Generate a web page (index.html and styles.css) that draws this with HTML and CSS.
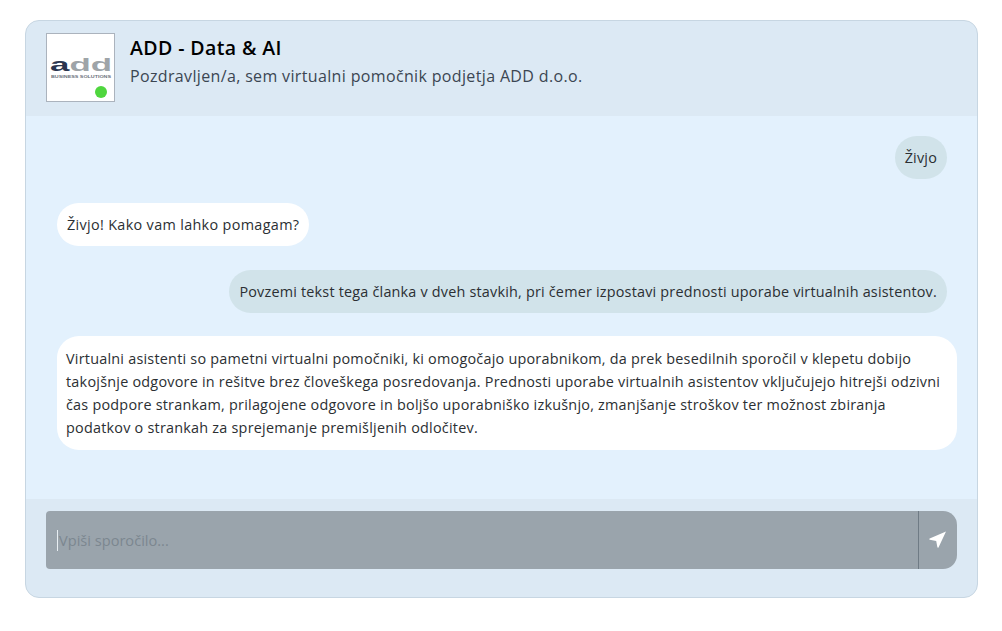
FILE: index.html
```html
<!DOCTYPE html>
<html lang="sl">
<head>
<meta charset="utf-8">
<title>ADD - Data &amp; AI</title>
<link rel="stylesheet" href="styles.css">
</head>
<body>
<main class="chat">
  <header class="chat-header">
    <div class="avatar">
      <svg class="logo" viewBox="0 0 67 67" width="67" height="67" aria-label="add">
        <text class="logo-mark" x="3" y="36.5" textLength="62" lengthAdjust="spacingAndGlyphs"><tspan class="logo-a">a</tspan><tspan class="logo-d">dd</tspan></text>
        <text class="logo-sub" x="4" y="44" textLength="60" lengthAdjust="spacingAndGlyphs">BUSINESS SOLUTIONS</text>
      </svg>
      <span class="status"></span>
    </div>
    <div class="heading">
      <h1 class="title">ADD - Data &amp; AI</h1>
      <p class="subtitle">Pozdravljen/a, sem virtualni pomočnik podjetja ADD d.o.o.</p>
    </div>
  </header>
  <section class="messages">
    <div class="msg msg-user">Živjo</div>
    <div class="msg msg-bot msg-short">Živjo! Kako vam lahko pomagam?</div>
    <div class="msg msg-user">Povzemi tekst tega članka v dveh stavkih, pri čemer izpostavi prednosti uporabe virtualnih asistentov.</div>
    <div class="msg msg-bot msg-long">Virtualni asistenti so pametni virtualni pomočniki, ki omogočajo uporabnikom, da prek besedilnih sporočil v klepetu dobijo<br>takojšnje odgovore in rešitve brez človeškega posredovanja. Prednosti uporabe virtualnih asistentov vključujejo hitrejši odzivni<br>čas podpore strankam, prilagojene odgovore in boljšo uporabniško izkušnjo, zmanjšanje stroškov ter možnost zbiranja<br>podatkov o strankah za sprejemanje premišljenih odločitev.</div>
  </section>
  <footer class="composer">
    <div class="input-group">
      <div class="input"><span class="caret"></span><span class="placeholder">Vpiši sporočilo...</span></div>
      <button class="send" type="button" aria-label="Pošlji">
        <svg viewBox="0 0 18 18" width="18" height="18"><path d="M17 .5.7 7.6c-.6.3-.5 1 .1 1.1l6.4 1.2 1.2 6.4c.1.6.8.7 1.1.1z" fill="#fff"/></svg>
      </button>
    </div>
  </footer>
</main>
</body>
</html>
```
FILE: styles.css
```css
* { box-sizing: border-box; }
html, body { margin: 0; background: #fff; }
body {
  padding: 20px 24px 33px 25px;
  font-family: "Open Sans", "Noto Sans", sans-serif;
  color: #212529;
}
.chat {
  height: 578px;
  display: flex;
  flex-direction: column;
  border: 1px solid #c7d6e2;
  border-radius: 14px;
  overflow: hidden;
  background: #dce9f4;
}
.chat-header {
  height: 95px;
  flex: none;
  display: flex;
  align-items: flex-start;
  gap: 15px;
  padding: 12px 20px 0;
}
.avatar {
  position: relative;
  width: 69px;
  height: 69px;
  flex: none;
  background: #fff;
  border: 1px solid #abb3bd;
}
.logo { display: block; }
.logo-mark { font: 700 19px "Liberation Sans", sans-serif; }
.logo-a { fill: #2b3550; }
.logo-d { fill: #9ea4a8; }
.logo-sub { font: 700 3px "Liberation Sans", sans-serif; fill: #6c727c; }
.status {
  position: absolute;
  right: 7px;
  bottom: 3px;
  width: 12px;
  height: 12px;
  border-radius: 50%;
  background: #4fd63e;
}
.heading { padding-top: 3px; }
.title {
  margin: 0;
  font-size: 19.5px;
  line-height: 24px;
  font-weight: 600;
  letter-spacing: .4px;
  color: #000;
}
.subtitle {
  margin: 4px 0 0;
  font-size: 16px;
  line-height: 24px;
  letter-spacing: .35px;
  color: #3b4652;
}
.messages {
  flex: 1;
  display: flex;
  flex-direction: column;
  align-items: flex-start;
  gap: 24px;
  padding: 20px 20px 0 31px;
  background: #e3f1fd;
}
.msg {
  font-size: 14.4px;
  line-height: 23px;
  letter-spacing: .2px;
  padding: 10px;
  border-radius: 22px;
  background: #fff;
  color: #2b2f33;
}
.msg-user {
  align-self: flex-end;
  margin-right: 10px;
  background: #d1e3ea;
}
.msg-short { letter-spacing: .33px; }
.msg-long {
  align-self: stretch;
  margin-top: -1px;
  padding: 11px 9px;
  letter-spacing: .23px;
}
.composer {
  height: 98px;
  flex: none;
  padding: 12px 20px 0;
}
.input-group {
  display: flex;
  height: 58px;
  border-radius: 4px 14px 14px 4px;
  background: #9aa4ac;
  overflow: hidden;
}
.input {
  flex: 1;
  display: flex;
  align-items: center;
  padding-left: 11px;
  border-right: 1px solid #6f7b85;
}
.caret {
  width: 1px;
  height: 21px;
  background: #e8eef2;
  flex: none;
}
.placeholder {
  font-size: 14.6px;
  color: #7c8790;
  margin-left: 1px;
}
.send {
  width: 38px;
  flex: none;
  display: flex;
  align-items: center;
  justify-content: center;
  padding: 0;
  border: 0;
  background: transparent;
}
```
